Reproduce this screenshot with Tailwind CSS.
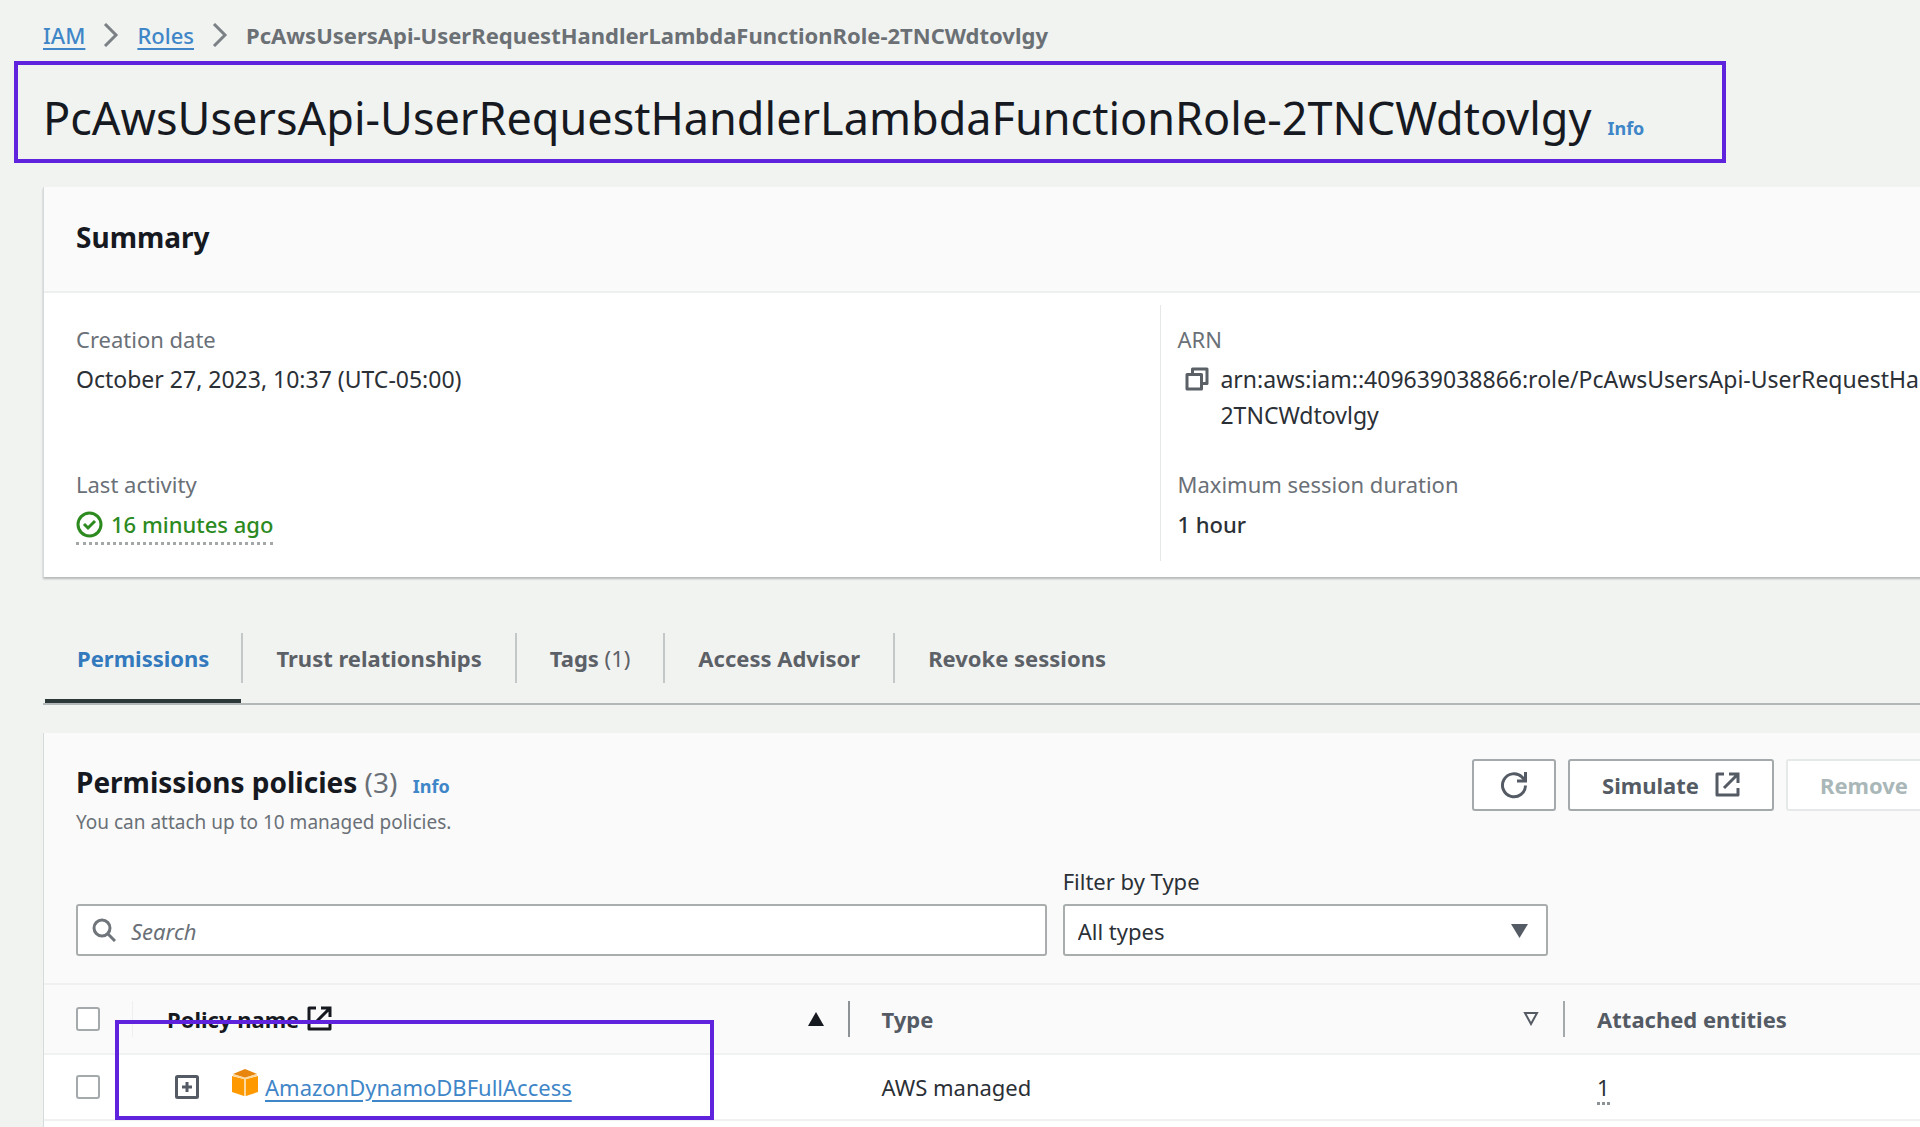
<!DOCTYPE html>
<html lang="en">
<head>
  <meta charset="UTF-8">
  <meta name="viewport" content="width=device-width, initial-scale=1.0">
  <title>IAM - Roles</title>
  <script src="https://cdn.jsdelivr.net/npm/@tailwindcss/browser@4"></script>
</head>
<body class="min-h-screen overflow-hidden bg-[#f1f3f1] font-['Noto_Sans','Open_Sans',sans-serif] text-[22px] leading-9 text-[#2b3036]">
  <main class="pl-[43px]">

    <!-- Breadcrumbs -->
    <nav aria-label="Breadcrumbs" class="pt-[17px] h-[61px]">
      <ol class="flex items-center gap-[18px] font-bold text-[#6b7075] whitespace-nowrap">
        <li><a href="#" class="font-medium text-[#3f86c8] underline underline-offset-4">IAM</a></li>
        <li aria-hidden="true">
          <svg class="w-4 h-6" viewBox="0 0 16 24" fill="none" stroke="#7c8185" stroke-width="3"><path d="M2 1l11 11L2 23"/></svg>
        </li>
        <li><a href="#" class="font-medium text-[#3f86c8] underline underline-offset-4">Roles</a></li>
        <li aria-hidden="true">
          <svg class="w-4 h-6" viewBox="0 0 16 24" fill="none" stroke="#7c8185" stroke-width="3"><path d="M2 1l11 11L2 23"/></svg>
        </li>
        <li>PcAwsUsersApi-UserRequestHandlerLambdaFunctionRole-2TNCWdtovlgy</li>
      </ol>
    </nav>

    <!-- Page title -->
    <div class="-ml-[29px] flex items-baseline gap-4 h-[102px] w-[1712px] border-4 border-[#5f22dd] pl-[25px] pt-[21px] whitespace-nowrap">
      <h1 class="text-[45px] leading-[64px] text-[#16191f]">PcAwsUsersApi-UserRequestHandlerLambdaFunctionRole-2TNCWdtovlgy</h1>
      <a href="#" class="text-[18px] font-bold text-[#3f86c8]">Info</a>
    </div>

    <!-- Summary -->
    <section class="mt-6 -mr-[22px] bg-white border-l border-[#d5dbdb] shadow-[0_2px_2px_0_#b4b8b8]">
      <header class="h-[106px] pt-8 px-8 bg-[#fafafa] border-b-2 border-[#eeefef]">
        <h2 class="text-[28px] font-bold text-[#16191f]">Summary</h2>
      </header>
      <div class="grid grid-cols-[10fr_7fr] pt-3 pb-4">
        <dl class="px-8 pt-4 pb-[14px]">
          <dt class="text-[#6a7077]">Creation date</dt>
          <dd class="mt-1 h-[105px] text-[23px]">October 27, 2023, 10:37 (UTC-05:00)</dd>
          <dt class="text-[#6a7077]">Last activity</dt>
          <dd class="mt-1">
            <span class="inline-flex items-center gap-2 font-medium text-[#2c8a1e] border-b-3 border-dotted border-[#a3a7a7]">
              <svg class="w-[27px] h-[27px]" viewBox="0 0 27 27" fill="none" stroke="currentColor" stroke-width="3"><circle cx="13.5" cy="13.5" r="11.5"/><path d="M8 13l4 4 7-7"/></svg>
              16 minutes ago
            </span>
          </dd>
        </dl>
        <dl class="min-w-0 pl-4 pt-4 border-l border-[#e6e8e8] whitespace-nowrap">
          <dt class="text-[#6a7077]">ARN</dt>
          <dd class="mt-1 h-[105px] flex">
            <button type="button" aria-label="Copy ARN" class="shrink-0 w-[43px] h-9 pl-2">
              <svg class="w-6 h-6" viewBox="0 0 24 24" fill="none" stroke="#5a6066" stroke-width="3"><path d="M2 7.500h14.500V22H2z" stroke-linejoin="round"/><path d="M7.500 7V2H22v14.500h-5" stroke-linejoin="round"/></svg>
            </button>
            <span class="text-[23px]">arn:aws:iam::409639038866:role/PcAwsUsersApi-UserRequestHandlerLambdaFunctionRole-<br>2TNCWdtovlgy</span>
          </dd>
          <dt class="text-[#6a7077]">Maximum session duration</dt>
          <dd class="mt-1 font-medium">1 hour</dd>
        </dl>
      </div>
    </section>

    <!-- Tabs -->
    <div role="tablist" class="mt-[42px] h-[86px] flex border-b-2 border-[#b3b8b8] font-bold text-[#5c6167] whitespace-nowrap">
      <button type="button" role="tab" aria-selected="true" class="h-[84px] border-b-4 border-[#2c3838] px-8 pb-[2px] ml-[2px] text-[#3279bd]">Permissions</button>
      <button type="button" role="tab" aria-selected="false" class="mt-[14px] h-[50px] border-l-2 border-[#c3c7c7] px-[33px]">Trust relationships</button>
      <button type="button" role="tab" aria-selected="false" class="mt-[14px] h-[50px] border-l-2 border-[#c3c7c7] px-[33px]">Tags <span class="font-normal">(1)</span></button>
      <button type="button" role="tab" aria-selected="false" class="mt-[14px] h-[50px] border-l-2 border-[#c3c7c7] px-[33px]">Access Advisor</button>
      <button type="button" role="tab" aria-selected="false" class="mt-[14px] h-[50px] border-l-2 border-[#c3c7c7] px-[33px]">Revoke sessions</button>
    </div>

    <!-- Permissions policies -->
    <section class="mt-7 -mr-[22px] bg-[#fafafa] border-l border-[#d5dbdb]">
      <header class="flex justify-between pl-8 pt-[26px] whitespace-nowrap">
        <div class="pt-[5px]">
          <h2 class="text-[28px] font-bold text-[#16191f]">Permissions policies <span class="font-normal text-[#6a7077]">(3)</span>
            <a href="#" class="ml-2 text-[18px] text-[#3f86c8]">Info</a></h2>
          <p class="text-[19px] text-[#6a7077]">You can attach up to 10 managed policies.</p>
        </div>
        <div class="flex gap-3 font-bold text-[#545b64]">
          <button type="button" aria-label="Refresh" class="w-[84px] h-[52px] flex items-center justify-center bg-white border-2 border-[#a4a9ab] rounded-[3px]">
            <svg class="w-7 h-7" viewBox="0 0 28 28" fill="none" stroke="currentColor" stroke-width="3"><path d="M25.500 14.500A11.500 11.500 0 1 1 22 6l3 3.500"/><path d="M25.500 1v9H17"/></svg>
          </button>
          <button type="button" class="h-[52px] flex items-center gap-4 px-8 bg-white border-2 border-[#a4a9ab] rounded-[3px]">Simulate
            <svg class="w-[25px] h-[25px]" viewBox="0 0 25 25" fill="none" stroke="currentColor" stroke-width="3"><path d="M9 2H2v21h21v-7" stroke-linejoin="round"/><path d="M14 2h9v9M23 2L9 16"/></svg>
          </button>
          <button type="button" disabled class="h-[52px] px-8 bg-white border-2 border-[#e6e9e9] rounded-[3px] text-[#aab7b8]">Remove</button>
        </div>
      </header>

      <div class="pl-8 mt-[23px] w-[1504px] max-w-full grid grid-cols-[2fr_1fr] gap-x-4 items-end">
        <div class="relative">
          <svg class="absolute left-4 top-[14px] w-6 h-6" viewBox="0 0 24 24" fill="none" stroke="#6f757b" stroke-width="3"><circle cx="10" cy="10" r="8"/><path d="M16 16l7 7"/></svg>
          <input type="search" aria-label="Search" placeholder="Search" class="block w-full h-[52px] bg-white border-2 border-[#a9adae] rounded-[3px] pt-[3px] pl-[53px] placeholder:italic placeholder:text-[#6a7077]">
        </div>
        <div class="relative">
          <label for="typeFilter" class="block mb-[5px]">Filter by Type</label>
          <select id="typeFilter" class="appearance-none block w-full h-[52px] bg-white border-2 border-[#a9adae] rounded-[3px] pt-[3px] px-[13px]">
            <option>All types</option>
          </select>
          <svg class="absolute right-5 bottom-[18px] w-[17px] h-[14px] pointer-events-none" viewBox="0 0 17 14" fill="#545b64"><path d="M0 0h17L8.500 14z"/></svg>
        </div>
      </div>

      <div class="relative mt-[27px]">
        <table class="w-full table-fixed text-left whitespace-nowrap">
          <colgroup>
            <col class="w-[88px]">
            <col class="w-[37.7%]">
            <col class="w-[37.7%]">
            <col>
          </colgroup>
          <thead class="text-[#545b64]">
            <tr class="h-[70px] border-y-2 border-[#f0f1f1]">
              <th class="pl-8"><input type="checkbox" aria-label="Select all policies" class="appearance-none block w-6 h-6 bg-white border-2 border-[#a4a9ab] rounded-[3px]"></th>
              <th>
                <div class="flex items-center h-9 border-l border-[#eeefef] pl-[34px] pr-6 text-[#16191f]">Policy name
                  <svg class="ml-2 w-[25px] h-[25px]" viewBox="0 0 25 25" fill="none" stroke="currentColor" stroke-width="3"><path d="M9 2H2v21h21v-7" stroke-linejoin="round"/><path d="M14 2h9v9M23 2L9 16"/></svg>
                  <svg class="ml-auto w-4 h-[14px]" viewBox="0 0 16 14" fill="currentColor"><path d="M0 14h16L8 0z"/></svg>
                </div>
              </th>
              <th>
                <div class="flex items-center h-9 border-l-2 border-[#8d9296] pl-8 pr-6">Type
                  <svg class="ml-auto w-4 h-[14px]" viewBox="0 0 16 14" fill="none" stroke="currentColor" stroke-width="2"><path d="M2 1h12L8 12z"/></svg>
                </div>
              </th>
              <th><div class="h-9 border-l-2 border-[#a4a9ab] pl-8">Attached entities</div></th>
            </tr>
          </thead>
          <tbody class="bg-white">
            <tr class="h-[66px] border-b-2 border-[#f0f1f1]">
              <td class="pl-8"><input type="checkbox" aria-label="Select AmazonDynamoDBFullAccess" class="appearance-none block w-6 h-6 bg-white border-2 border-[#a4a9ab] rounded-[3px]"></td>
              <td>
                <div class="flex items-center pl-[43px]">
                  <button type="button" aria-label="Expand policy">
                    <svg class="w-6 h-6" viewBox="0 0 24 24" fill="none" stroke="#545b64" stroke-width="3"><rect x="1.500" y="1.500" width="21" height="21" rx="1"/><path d="M12 7v10M7 12h10"/></svg>
                  </button>
                  <svg class="ml-[33px] mb-2 w-[26px] h-[27px]" viewBox="0 0 26 27">
                    <path fill="#e8850c" d="M1 5l12-5 12 5-12 4z"/>
                    <path fill="#f90" d="M0 7l12 3v17L0 23zM26 7l-12 3v17l12-4z"/>
                    <path fill="#fbd9a0" d="M1 5l12 3.500L25 5v2l-12 3.500L1 7zM12 10h2v17h-2z"/>
                  </svg>
                  <a href="#" class="ml-[7px] text-[#3f86c8] underline underline-offset-4">AmazonDynamoDBFullAccess</a>
                </div>
              </td>
              <td class="pl-[34px]">AWS managed</td>
              <td class="pl-[34px]"><span class="border-b-3 border-dotted border-[#8d9296]">1</span></td>
            </tr>
            <tr class="h-2"><td colspan="4"></td></tr>
          </tbody>
        </table>
        <!-- Highlight over the policy -->
        <div class="absolute left-[71px] top-[37px] w-[599px] h-[100px] border-4 border-[#5f22dd] pointer-events-none"></div>
      </div>
    </section>
  </main>
</body>
</html>
